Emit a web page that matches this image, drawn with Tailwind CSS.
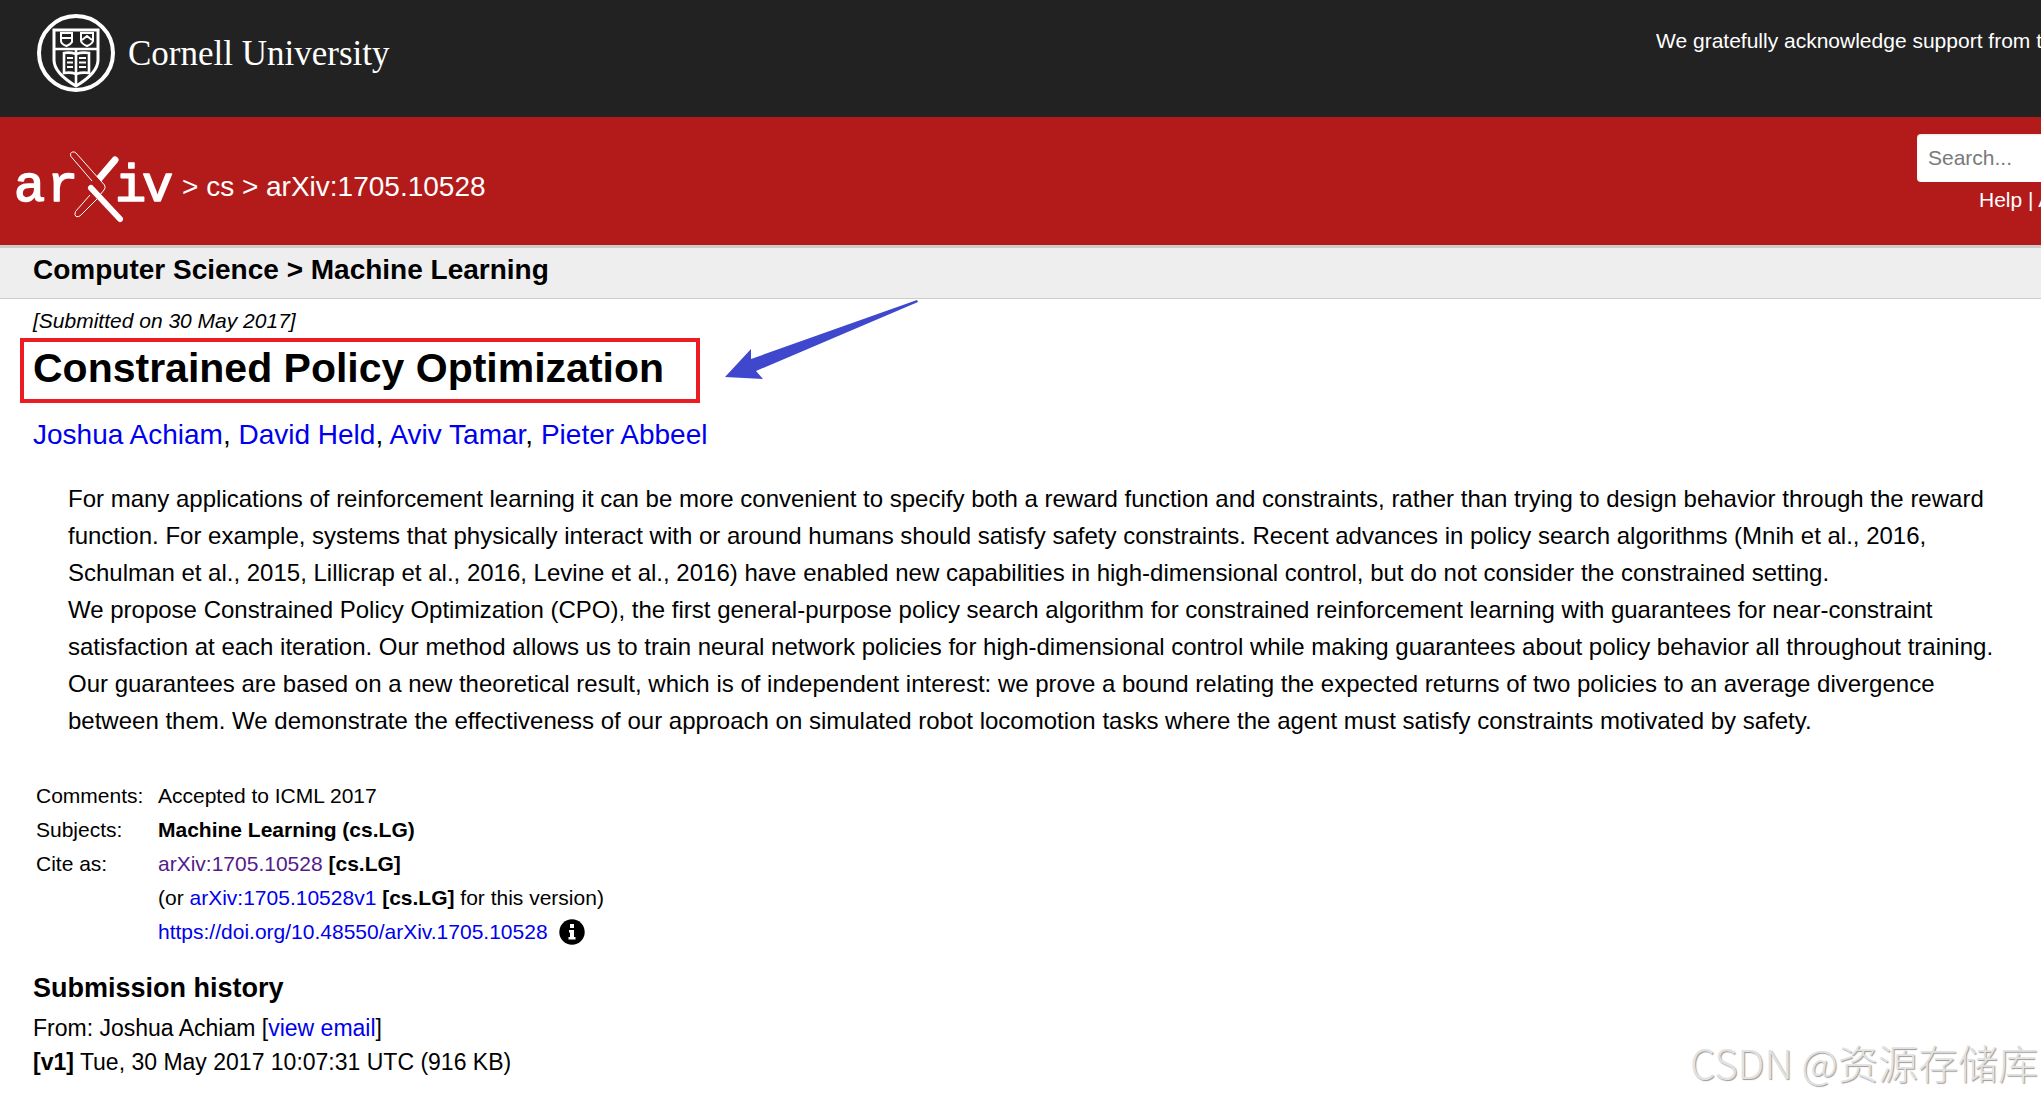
<!DOCTYPE html>
<html lang="en">
<head>
<meta charset="utf-8">
<title>[1705.10528] Constrained Policy Optimization</title>
<script src="https://cdn.jsdelivr.net/npm/@tailwindcss/browser@4"></script>
</head>
<body class="relative min-h-screen overflow-x-hidden bg-white font-['Liberation_Sans',Arial,sans-serif] text-[21px] text-black">
<header>
  <div class="flex h-[117px] items-start justify-between bg-[#222] text-white">
    <a href="#" class="flex items-center pt-[14px] pl-[37px]">
      <svg class="size-[78px]" viewBox="0 0 78 78" fill="none" stroke="#fff" aria-hidden="true">
        <circle cx="39" cy="39" r="37" stroke-width="4"/>
        <path d="M17 16H61V46Q61 59 39 72Q17 59 17 46Z" stroke-width="3"/>
        <path d="M16 35H62M39 35V72" stroke-width="2.6"/>
        <path d="M24 19H35V28Q34 30 29.500 32Q24 30 24 27ZM24 24H35M44 19H56V27Q55 30 50 32Q45 30 44 27ZM45 26L50 22L55 26" stroke-width="2"/>
        <path d="M39 40Q33 38 27 39V59Q34 58 39 60Q45 58 52 59V39Q45 38 39 40" stroke-width="2.600"/>
        <path d="M30 44H36M30 48.500H36M30 53H36M42 44H49M42 48.500H49M42 53H49" stroke-width="1.800"/>
      </svg>
      <span class="pt-[2px] pl-[13px] font-['Liberation_Serif',serif] text-[35px] leading-[40px]">Cornell University</span>
    </a>
    <p class="w-[385px] overflow-hidden pt-[28px] text-[21px] leading-[26px] whitespace-nowrap">We gratefully acknowledge support from the</p>
  </div>
  <div class="flex h-[131px] items-start justify-between border-b-[3px] border-[#ccc] bg-[#b31b1b] text-white">
    <nav class="flex pt-[33px] pl-[14px] text-[28px] leading-[74px]" aria-label="Breadcrumb">
      <a href="#" aria-label="arXiv">
        <svg class="h-[76px] w-[160px]" viewBox="0 0 160 76" aria-hidden="true">
          <g fill="#fff" stroke="#fff" stroke-linejoin="round" class="font-['Liberation_Mono',monospace] text-[52px] font-normal">
            <text x="0 33 101 128" y="51" stroke-width="1.6">ariv</text>
          </g>
          <path d="M101 10L84 30" stroke="#fff" stroke-width="7" stroke-linecap="round"/>
          <path d="M76 45L61.500 61.500Q60 65 62 66.500Q65 67.500 67 65L83 49" fill="none" stroke="#fff" stroke-width="1"/>
          <path d="M78 31L57 6.500Q55.500 3 58.500 2Q60.500 1.500 62 3L90.500 35Q92 37.500 90 40L85.500 45.500" fill="#b31b1b" stroke="#fff" stroke-width="1"/>
          <path d="M77 38L106 69" stroke="#fff" stroke-width="6" stroke-linecap="round"/>
        </svg>
      </a>
      <span class="pl-[8px]">&gt; <a href="#">cs</a> &gt; arXiv:1705.10528</span>
    </nav>
    <form class="w-[124px] overflow-hidden pt-[17px] whitespace-nowrap">
      <input type="search" aria-label="Search" placeholder="Search..." class="block h-[48px] w-[200px] rounded bg-white px-[11px] text-[21px] text-black shadow-[inset_0_1px_2px_#0a0a0a1a] placeholder:text-[#7a7a7a]">
      <div class="pt-[5px] pl-[62px] text-[21px] leading-[26px]"><a href="#">Help</a> | <a href="#">Advanced Search</a></div>
    </form>
  </div>
</header>
<div class="h-[51px] border-b border-[#ccc] bg-[#eee] pl-[33px] text-[28px] leading-[43px] font-bold">Computer Science &gt; Machine Learning</div>
<main class="px-[33px]">
  <p class="pt-[8px] text-[21px] leading-[28px] italic">[Submitted on 30 May 2017]</p>
  <div class="-ml-[13px] flex items-start pt-[3px]">
    <h1 class="h-[65px] w-[680px] border-4 border-[#ed1c24] pl-[9px] text-[41px] leading-[52px] font-bold">Constrained Policy Optimization</h1>
  </div>
  <svg class="absolute top-[299px] left-[723px] h-[82px] w-[198px]" viewBox="723 299 198 82" fill="#3f48cc" aria-hidden="true"><path d="M725 377L751 349V359L917 300L918 302L756 371L763 379Z"/></svg>
  <p class="pt-[14px] text-[28px] leading-[36px] text-black [&>a]:text-[#0000ee]"><a href="#">Joshua Achiam</a>, <a href="#">David Held</a>, <a href="#">Aviv Tamar</a>, <a href="#">Pieter Abbeel</a></p>
  <blockquote class="ml-[35px] pt-[27px] text-[24px] leading-[37px]">For many applications of reinforcement learning it can be more convenient to specify both a reward function and constraints, rather than trying to design behavior through the reward function. For example, systems that physically interact with or around humans should satisfy safety constraints. Recent advances in policy search algorithms (Mnih et al., 2016, Schulman et al., 2015, Lillicrap et al., 2016, Levine et al., 2016) have enabled new capabilities in high-dimensional control, but do not consider the constrained setting.<br>We propose Constrained Policy Optimization (CPO), the first general-purpose policy search algorithm for constrained reinforcement learning with guarantees for near-constraint satisfaction at each iteration. Our method allows us to train neural network policies for high-dimensional control while making guarantees about policy behavior all throughout training. Our guarantees are based on a new theoretical result, which is of independent interest: we prove a bound relating the expected returns of two policies to an average divergence between them. We demonstrate the effectiveness of our approach on simulated robot locomotion tasks where the agent must satisfy constraints motivated by safety.</blockquote>
  <table class="mt-[40px] ml-[3px] text-left text-[21px] leading-[34px] [&_a]:text-[#0000ee] [&_th]:w-[122px] [&_th]:align-top [&_th]:font-normal">
    <tr><th scope="row">Comments:</th><td>Accepted to ICML 2017</td></tr>
    <tr><th scope="row">Subjects:</th><td class="font-bold">Machine Learning (cs.LG)</td></tr>
    <tr><th scope="row">Cite as:</th><td><a href="#" class="text-[#551a8b]!">arXiv:1705.10528</a> <b>[cs.LG]</b><br>(or <a href="#">arXiv:1705.10528v1</a> <b>[cs.LG]</b> for this version)
      <div class="flex items-center gap-[11px]"><a href="#">https://doi.org/10.48550/arXiv.1705.10528</a>
        <button type="button" aria-label="About this DOI"><svg class="size-[26px]" viewBox="0 0 26 26" aria-hidden="true"><circle cx="13" cy="13" r="12.700"/><path fill="#fff" d="M11 5H15V9H11ZM10 11H15V18H16.500V20.500H9.500V18H11V13.500H10Z"/></svg></button></div></td></tr>
  </table>
  <h2 class="pt-[21px] text-[27px] leading-[36px] font-bold">Submission history</h2>
  <p class="pt-[5px] text-[23px] leading-[34px]">From: Joshua Achiam [<a href="#" class="text-[#0000ee]">view email</a>]<br><b>[v1]</b> Tue, 30 May 2017 10:07:31 UTC (916 KB)</p>
</main>
<div class="absolute right-[3px] bottom-[10px] font-['Noto_Sans_CJK_SC',sans-serif] text-[40px] leading-[56px] font-light text-[#e2e2e2] [text-shadow:1px_1px_1px_#999]">CSDN @资源存储库</div>
</body>
</html>
